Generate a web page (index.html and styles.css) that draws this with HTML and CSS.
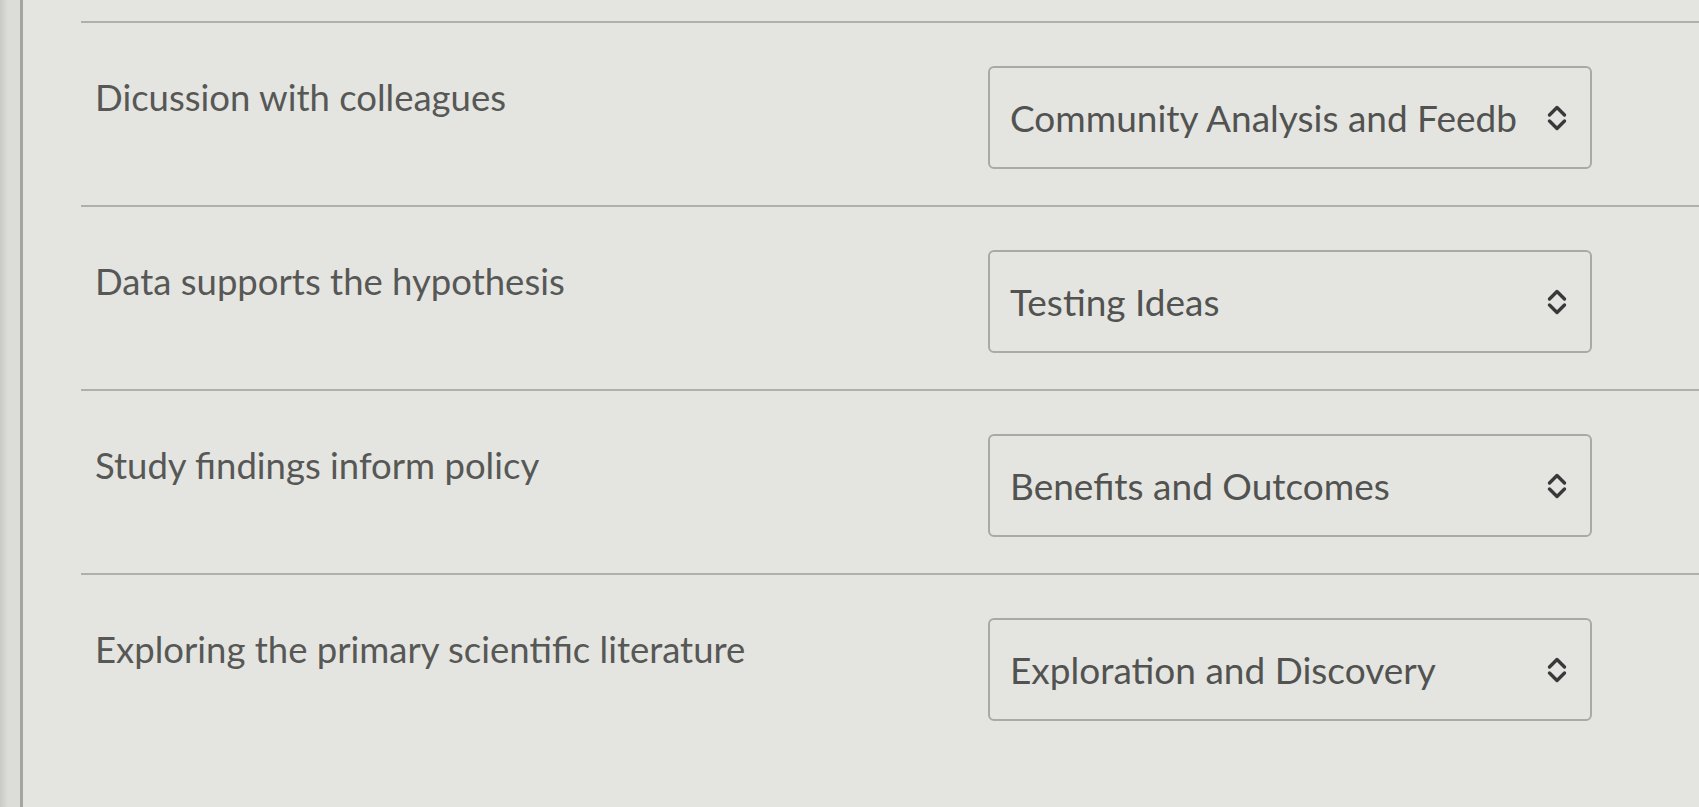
FILE: index.html
```html
<!DOCTYPE html>
<html lang="en">
<head>
<meta charset="utf-8">
<title>Matching</title>
<link rel="stylesheet" href="styles.css">
</head>
<body>
<div class="screen">
  <div class="frame">
    <div class="row">
      <div class="label">Dicussion with colleagues</div>
      <div class="select">
        <span class="value">Community Analysis and Feedb</span>
        <svg class="chev" viewBox="0 0 22 28" width="22" height="28"><path d="M3.5 11 L11 3.5 L18.5 11 M3.5 17 L11 24.5 L18.5 17"/></svg>
      </div>
    </div>
    <div class="row">
      <div class="label">Data supports the hypothesis</div>
      <div class="select">
        <span class="value">Testing Ideas</span>
        <svg class="chev" viewBox="0 0 22 28" width="22" height="28"><path d="M3.5 11 L11 3.5 L18.5 11 M3.5 17 L11 24.5 L18.5 17"/></svg>
      </div>
    </div>
    <div class="row">
      <div class="label">Study findings inform policy</div>
      <div class="select">
        <span class="value">Benefits and Outcomes</span>
        <svg class="chev" viewBox="0 0 22 28" width="22" height="28"><path d="M3.5 11 L11 3.5 L18.5 11 M3.5 17 L11 24.5 L18.5 17"/></svg>
      </div>
    </div>
    <div class="row">
      <div class="label">Exploring the primary scientific literature</div>
      <div class="select">
        <span class="value">Exploration and Discovery</span>
        <svg class="chev" viewBox="0 0 22 28" width="22" height="28"><path d="M3.5 11 L11 3.5 L18.5 11 M3.5 17 L11 24.5 L18.5 17"/></svg>
      </div>
    </div>
  </div>
</div>
</body>
</html>
```
FILE: styles.css
```css
html, body {
  margin: 0;
  padding: 0;
  height: 100%;
}
body {
  background: #d9dad6;
  font-family: Lato, "Open Sans", "Liberation Sans", sans-serif;
  color: #555654;
  overflow: hidden;
}
.screen {
  height: 100%;
  padding-left: 8px;
  background: linear-gradient(90deg, #c9cac6 0, #dcddd9 8px);
}
.frame {
  height: 100%;
  margin-left: 12px;
  border-left: 3px solid #a4a5a1;
  background: #e4e5e1;
  padding-left: 58px;
  padding-top: 21px;
  box-sizing: border-box;
}
.row {
  box-sizing: border-box;
  height: 184px;
  border-top: 2px solid #afb0ac;
  display: grid;
  grid-template-columns: 1fr 604px;
  align-items: start;
  padding: 43px 107px 0 14px;
}
.label {
  font-size: 36.5px;
  line-height: 41px;
  margin-top: 11px;
  white-space: nowrap;
  color: #575856;
}
.select {
  box-sizing: border-box;
  height: 103px;
  border: 2px solid #a9aaa6;
  border-radius: 6px;
  display: flex;
  align-items: center;
  padding: 0 22px 0 20px;
  gap: 16px;
}
.value {
  flex: 1;
  font-size: 37px;
  line-height: 44px;
  white-space: nowrap;
  overflow: hidden;
  color: #525351;
}
.chev {
  flex: none;
  fill: none;
  stroke: #383938;
  stroke-width: 3.4;
  stroke-linecap: round;
  stroke-linejoin: round;
}
```
